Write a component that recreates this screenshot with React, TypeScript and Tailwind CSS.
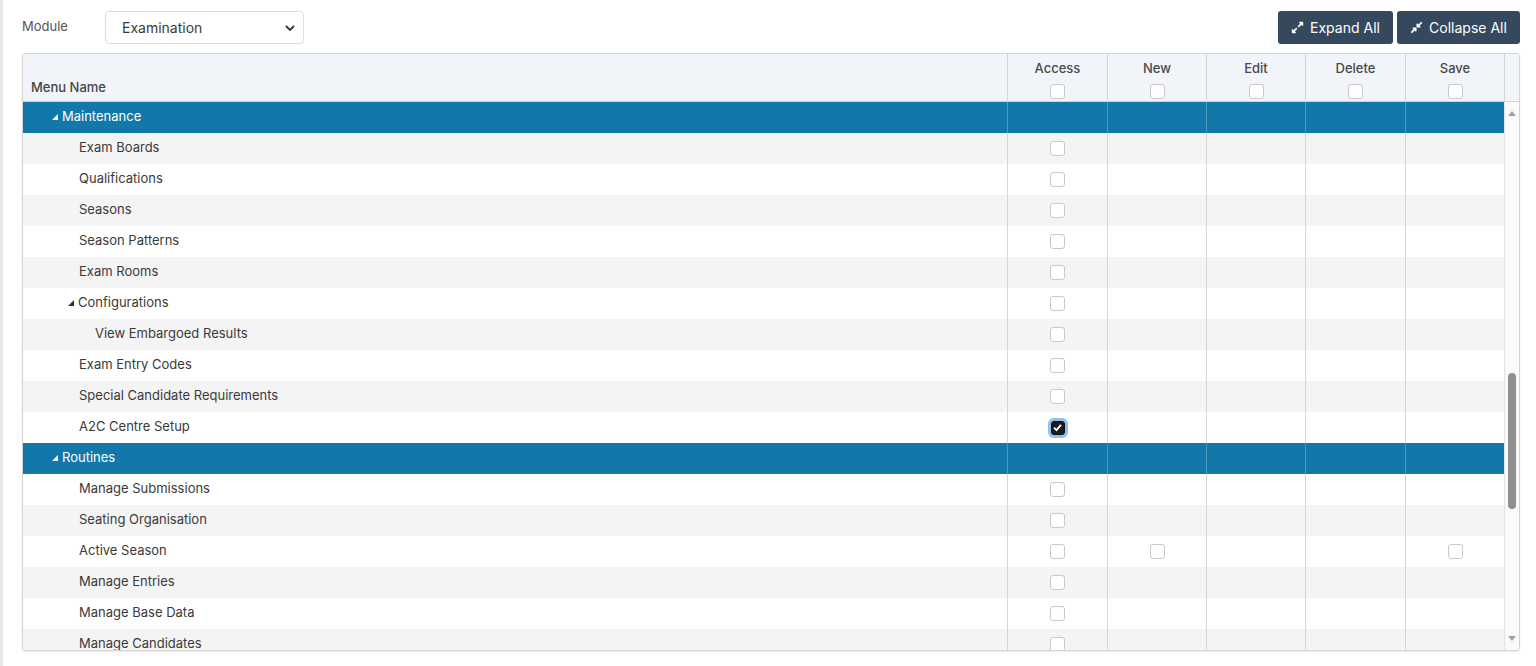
import { FaExpandAlt, FaCompressAlt } from "react-icons/fa";

type Row = {
  label: string;
  level: number;
  group?: boolean;
  toggle?: boolean;
  checked?: boolean;
  extra?: boolean;
};

const rows: Row[] = [
  { label: "Maintenance", level: 0, group: true, toggle: true },
  { label: "Exam Boards", level: 1 },
  { label: "Qualifications", level: 1 },
  { label: "Seasons", level: 1 },
  { label: "Season Patterns", level: 1 },
  { label: "Exam Rooms", level: 1 },
  { label: "Configurations", level: 1, toggle: true },
  { label: "View Embargoed Results", level: 2 },
  { label: "Exam Entry Codes", level: 1 },
  { label: "Special Candidate Requirements", level: 1 },
  { label: "A2C Centre Setup", level: 1, checked: true },
  { label: "Routines", level: 0, group: true, toggle: true },
  { label: "Manage Submissions", level: 1 },
  { label: "Seating Organisation", level: 1 },
  { label: "Active Season", level: 1, extra: true },
  { label: "Manage Entries", level: 1 },
  { label: "Manage Base Data", level: 1 },
  { label: "Manage Candidates", level: 1 },
];

const cols = [
  { name: "Access", w: "w-[100px]" },
  { name: "New", w: "w-[99px]" },
  { name: "Edit", w: "w-[99px]" },
  { name: "Delete", w: "w-[100px]" },
  { name: "Save", w: "w-[99px]" },
];

function Box({ checked }: { checked?: boolean }) {
  if (checked) {
    return (
      <span className="flex h-[14px] w-[14px] items-center justify-center rounded-[3px] border border-[#111] bg-[#1c1c1c] ring-[3px] ring-[#8fc0ef]">
        <svg viewBox="0 0 12 12" className="h-[11px] w-[11px]">
          <path d="M2.2 6.2 L4.9 8.8 L9.8 3.2" fill="none" stroke="#fff" strokeWidth="2" />
        </svg>
      </span>
    );
  }
  return <span className="block h-[15px] w-[15px] rounded-[3px] border border-[#c9c9c9] bg-white" />;
}

function Caret({ light }: { light?: boolean }) {
  return (
    <svg viewBox="0 0 6 6" className="mr-[4px] h-[6px] w-[6px]">
      <path d="M6 0 L6 6 L0 6 Z" fill={light ? "#ffffff" : "#333333"} />
    </svg>
  );
}

export default function App() {
  const indent = ["pl-[29px]", "pl-[56px]", "pl-[72px]"];
  return (
    <div className="flex h-[666px] w-full bg-white font-['Inter',sans-serif] text-[13px] text-[#3a3a3a]">
      <div className="w-[3px] bg-[#e6eaef]" />
      <div className="flex-1 pl-[19px] pr-[16px] pt-[11px]">
        <div className="flex h-[33px] items-start justify-between">
          <div className="flex items-start">
            <span className="w-[83px] pt-[6px] text-[13px] text-[#555]">Module</span>
            <div className="flex h-[33px] w-[199px] items-center justify-between rounded-[4px] border border-[#dedede] bg-white pl-[16px] pr-[8px] text-[14px] text-[#3a3a3a]">
              <span>Examination</span>
              <svg viewBox="0 0 10 6" className="h-[6px] w-[10px]">
                <path d="M1 1 L5 5 L9 1" fill="none" stroke="#333" strokeWidth="1.8" />
              </svg>
            </div>
          </div>
          <div className="flex gap-[4px]">
            <button className="flex h-[33px] w-[115px] items-center justify-center gap-[6px] rounded-[3px] bg-[#34495e] text-[14px] text-white">
              <FaExpandAlt className="h-[13px] w-[13px]" />
              Expand All
            </button>
            <button className="flex h-[33px] w-[123px] items-center justify-center gap-[6px] rounded-[3px] bg-[#34495e] text-[14px] text-white">
              <FaCompressAlt className="h-[13px] w-[13px]" />
              Collapse All
            </button>
          </div>
        </div>

        <div className="mt-[9px] flex h-[598px] flex-col overflow-hidden rounded-[3px] border border-[#d3d3d3] shadow-[0_1px_2px_rgba(0,0,0,0.08)]">
          <div className="flex h-[48px] shrink-0 border-b border-[#d3d3d3] bg-[#f1f4f8]">
            <div className="flex flex-1 items-end pb-[4px] pl-[8px] font-medium text-[#444]">Menu Name</div>
            {cols.map((c) => (
              <div key={c.name} className={`${c.w} flex flex-col items-center border-l border-[#d3d3d3] pt-[5px]`}>
                <span className="font-medium text-[#4a4a4a]">{c.name}</span>
                <span className="mt-[5px]">
                  <Box />
                </span>
              </div>
            ))}
            <div className="w-[15px] border-l border-[#d3d3d3]" />
          </div>

          <div className="flex min-h-0 flex-1">
            <div className="flex-1 overflow-hidden">
              {rows.map((r, i) => {
                const bg = r.group ? "bg-[#1277a9]" : i % 2 === 1 ? "bg-[#f4f4f4]" : "bg-white";
                const line = r.group ? "border-[#4d9ac0]" : "border-[#d6d6d6]";
                return (
                  <div key={r.label} className={`flex h-[31px] ${bg}`}>
                    <div
                      className={`flex flex-1 items-center pb-[2px] ${r.toggle ? (r.level === 0 ? "pl-[29px]" : "pl-[45px]") : indent[r.level]} ${
                        r.group ? "text-white" : ""
                      }`}
                    >
                      {r.toggle && <Caret light={r.group} />}
                      {r.label}
                    </div>
                    {cols.map((c, ci) => (
                      <div key={c.name} className={`${c.w} flex items-center justify-center border-l ${line}`}>
                        {!r.group && (ci === 0 || (r.extra && (ci === 1 || ci === 4))) && <Box checked={ci === 0 && r.checked} />}
                      </div>
                    ))}
                  </div>
                );
              })}
            </div>
            <div className="relative w-[15px] shrink-0 border-l border-[#e2e2e2] bg-[#fafafa]">
              <svg viewBox="0 0 8 5" className="absolute left-[3px] top-[9px] h-[5px] w-[8px]">
                <path d="M0 5 L4 0 L8 5 Z" fill="#a3a3a3" />
              </svg>
              <div className="absolute left-[3px] top-[271px] h-[136px] w-[8px] rounded-full bg-[#8f8f8f]" />
              <svg viewBox="0 0 8 5" className="absolute bottom-[9px] left-[3px] h-[5px] w-[8px]">
                <path d="M0 0 L8 0 L4 5 Z" fill="#a3a3a3" />
              </svg>
            </div>
          </div>
        </div>
      </div>
    </div>
  );
}
